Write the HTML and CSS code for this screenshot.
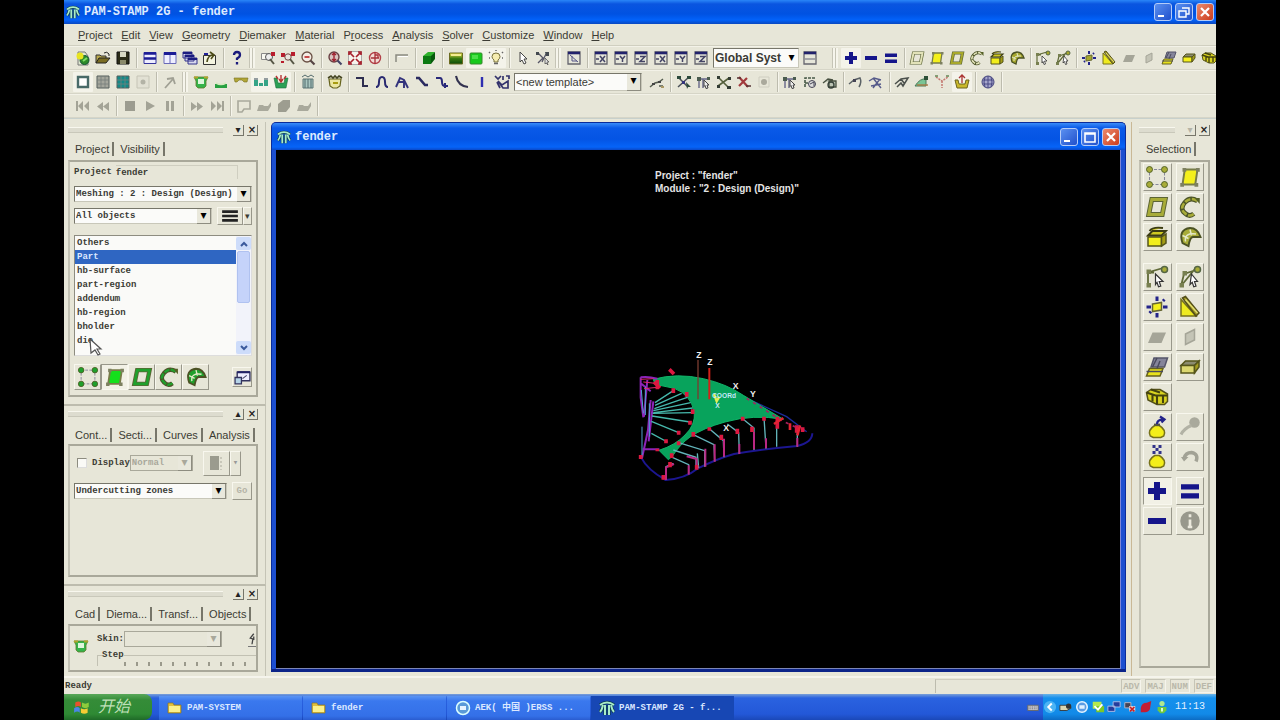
FILE: index.html
```html
<!DOCTYPE html>
<html lang="en">
<head>
<meta charset="utf-8">
<title>PAM-STAMP 2G - fender</title>
<link rel="stylesheet" href="styles.css">
</head>
<body>
<svg class="defs" aria-hidden="true">
  <defs>
    <linearGradient id="gGreen" x1="0" y1="0" x2="0" y2="1"><stop offset="0" stop-color="#f2e24a"/><stop offset=".5" stop-color="#3a7a10"/><stop offset="1" stop-color="#0a4a08"/></linearGradient>
  </defs>
  <symbol id="logo" viewBox="0 0 16 16"><path d="M1 5q7-5 14 0M4 5q-1 5-3 7M6 5v10M10 5v10M12 5q1 5 3 7" fill="none" stroke="#0c3a50" stroke-width="3.400"/><path d="M1 5q7-5 14 0M4 5q-1 5-3 7M6 5v10M10 5v10M12 5q1 5 3 7" fill="none" stroke="#a8ecc8" stroke-width="2"/></symbol>
  <symbol id="new" viewBox="0 0 16 16"><path d="M3 2h7l3 4v9H3z" fill="#dfe8d0" stroke="#777"/><circle cx="9.500" cy="10" r="4.500" fill="#2d8a2a" stroke="#153"/><circle cx="5" cy="6" r="3.500" fill="#e8e420"/><path d="M8 11l4-3" stroke="#7dde66" stroke-width="2"/></symbol>
  <symbol id="open" viewBox="0 0 16 16"><path d="M1 13V5h4l1 1h5v2" fill="#b9a84c" stroke="#333"/><path d="M1 13l3-5h11l-4 5z" fill="#7a6c22" stroke="#222"/><path d="M9 3q3-2 5 1v2" fill="none" stroke="#222"/></symbol>
  <symbol id="save" viewBox="0 0 16 16"><path d="M2 2h12v12H2z" fill="#2c2c18" stroke="#111"/><path d="M5 2h6v5H5z" fill="#d8d8c4"/><path d="M5 10h6v4H5z" fill="#89896a"/></symbol>
  <symbol id="hs" viewBox="0 0 16 16"><path d="M2 2.500h12v11H2z" fill="#eef" stroke="#33339c"/><path d="M2 3.500h12M2 8.500h12" stroke="#1c1c96" stroke-width="2.500"/></symbol>
  <symbol id="vs" viewBox="0 0 16 16"><path d="M2 2.500h12v11H2zM8 3v10" fill="#eef" stroke="#6a6ab8"/><path d="M2 3.500h12" stroke="#1c1c96" stroke-width="3"/></symbol>
  <symbol id="casc" viewBox="0 0 16 16"><path d="M1 2h9v6H1zM3 5h9v6H3zM6 8h9v6H6z" fill="#d8d8ee" stroke="#33338a"/><path d="M1 3h9M3 6h9M6 9h9" stroke="#1c1c80" stroke-width="2"/></symbol>
  <symbol id="neww" viewBox="0 0 16 16"><path d="M1.500 5.500h12v9h-12z" fill="#f4f4e0" stroke="#333"/><path d="M5 12q1-7 6-7M8 2l4 3-3 4" fill="none" stroke="#4b4a18" stroke-width="1.600"/><path d="M2 4h4" stroke="#229" stroke-width="2"/></symbol>
  <symbol id="help" viewBox="0 0 16 16"><path d="M5 5q0-3 3-3t3 3q0 2-3 3.500V10M8 12v2.500" fill="none" stroke="#1a1a7c" stroke-width="2.300"/></symbol>
  <symbol id="zsel" viewBox="0 0 16 16"><path d="M1.500 3.500h7v6h-7z" fill="#f8f8f0" stroke="#888"/><circle cx="9" cy="7" r="3.500" fill="#eee" stroke="#555"/><path d="M10 9l4 5" stroke="#554" stroke-width="2"/><path d="M11 2h4v4h-4z" fill="#b81c2c"/></symbol>
  <symbol id="zarea" viewBox="0 0 16 16"><path d="M1 3h4v4H1zM11 2h4v4h-4zM1 11h3v2H1z" fill="#b81c2c"/><circle cx="8" cy="7" r="3.200" fill="#e8e4dc" stroke="#744"/><path d="M10 9l4 5" stroke="#554" stroke-width="2"/></symbol>
  <symbol id="zout" viewBox="0 0 16 16"><circle cx="7" cy="7" r="5" fill="#f4ece4" stroke="#6a5044" stroke-width="1.300"/><path d="M4.500 7h5" stroke="#b22" stroke-width="1.600"/><path d="M10.500 10.500l4 4" stroke="#544" stroke-width="2.200"/></symbol>
  <symbol id="zdyn" viewBox="0 0 16 16"><circle cx="7" cy="7" r="5" fill="#d8c4c0" stroke="#6a4044" stroke-width="1.400"/><path d="M7 3v8M5 5l2-2 2 2M5 9l2 2 2-2" fill="none" stroke="#a02230" stroke-width="1.400"/><path d="M10.500 10.500l4 4" stroke="#446" stroke-width="2.200"/></symbol>
  <symbol id="fit" viewBox="0 0 16 16"><path d="M1.500 1.500h13v13h-13z" fill="#f6f2ec" stroke="#aaa"/><path d="M3 3l4 4M13 3L9 7M3 13l4-4M13 13L9 9M2 5V2h3M11 2h3v3M2 11v3h3M11 14h3v-3" fill="none" stroke="#a8202c" stroke-width="1.700"/></symbol>
  <symbol id="ctr" viewBox="0 0 16 16"><circle cx="8" cy="8" r="5.500" fill="#f2dcd6" stroke="#b34048" stroke-width="1.400"/><path d="M8 2v12M4 8h8M8 5h3v3" fill="none" stroke="#a83038" stroke-width="1.300"/></symbol>
  <symbol id="rule" viewBox="0 0 16 16"><path d="M2 12V5h12" fill="none" stroke="#8a8a80" stroke-width="1.500"/><path d="M4 6.500h10" stroke="#fff"/></symbol>
  <symbol id="gbox" viewBox="0 0 16 16"><path d="M2 6l5-4h7l-3 4z" fill="#2fb32c"/><path d="M2 6h8v8H2z" fill="#0c7a12"/><path d="M10 6l4-4v7l-4 5z" fill="#075a0c"/></symbol>
  <symbol id="grad" viewBox="0 0 16 16"><path d="M1.500 3h13v11h-13z" fill="url(#gGreen)" stroke="#6a6a20"/><path d="M3 5h10" stroke="#f4ec90" stroke-width="2"/></symbol>
  <symbol id="gsq" viewBox="0 0 16 16"><rect x="2" y="3" width="12" height="11" rx="1" fill="#17c91c" stroke="#36882c"/><path d="M4 5h6v4H4z" fill="#4ae048"/></symbol>
  <symbol id="bulb" viewBox="0 0 16 16"><path d="M8 3q4 0 4 3.500 0 2-2 3.500v2H6v-2Q4 8.500 4 6.500 4 3 8 3z" fill="#f5ecb0" stroke="#77703a"/><path d="M6 13.500h4M8 1V0M2 3L1 2M14 3l1-1M1 8h1M14 8h1" stroke="#666" stroke-width="1.500"/></symbol>
  <symbol id="cur" viewBox="0 0 16 16"><path d="M5 2l7 7H9l2 4-2 1-2-4-2 2z" fill="#fff" stroke="#444"/></symbol>
  <symbol id="curp" viewBox="0 0 16 16"><path d="M3 3l5 5-5 5M7 12l4-8" fill="none" stroke="#556" stroke-width="1.300"/><path d="M10 2h4v4h-3zM1 2h3v3H1z" fill="#444a50"/><path d="M10 8l4 4h-2l1 3-2-2-1 1z" fill="#ddd" stroke="#555" stroke-width=".8"/></symbol>
  <symbol id="w" viewBox="0 0 16 16"><path d="M2 2h12v12H2z" fill="#e6e6da" stroke="#65656e" stroke-width="1.300"/><path d="M2 3h12" stroke="#22226c" stroke-width="2.600"/></symbol>
  <symbol id="wl" viewBox="0 0 16 16"><use href="#w"/><path d="M6 6v5h5M4 5l8 7" fill="none" stroke="#558"/></symbol>
  <symbol id="wx" viewBox="0 0 16 16"><use href="#w"/><path d="M7 6l5 6M12 6l-5 6M3 9h3" stroke="#446" stroke-width="1.500"/></symbol>
  <symbol id="wy" viewBox="0 0 16 16"><use href="#w"/><path d="M7 6l2.500 3L12 6M9.500 9v3M3 9h3" fill="none" stroke="#446" stroke-width="1.500"/></symbol>
  <symbol id="wz" viewBox="0 0 16 16"><use href="#w"/><path d="M7 6.500h5l-5 5h5M3 9h3" fill="none" stroke="#446" stroke-width="1.500"/></symbol>
  <symbol id="wb" viewBox="0 0 16 16"><use href="#w"/><path d="M3 9h10" stroke="#778" stroke-width="1.200"/></symbol>
  <symbol id="plus" viewBox="0 0 16 16"><path d="M6 2h4v4h4v4h-4v4H6v-4H2V6h4z" fill="#15158a"/></symbol>
  <symbol id="minus" viewBox="0 0 16 16"><path d="M2 6h12v4H2z" fill="#15158a"/></symbol>
  <symbol id="equals" viewBox="0 0 16 16"><path d="M2 3.500h12V7H2zM2 9.500h12V13H2z" fill="#15158a"/></symbol>
  <symbol id="pts" viewBox="0 0 16 16"><path d="M3 3h10v10H3z" fill="none" stroke="#889" stroke-width=".7" stroke-dasharray="2 1"/><g fill="currentColor" stroke="#4a5a20" stroke-width=".6"><circle cx="3" cy="3" r="2"/><circle cx="13" cy="3" r="2"/><circle cx="3" cy="13" r="2"/><circle cx="13" cy="13" r="2"/></g></symbol>
  <symbol id="quadf" viewBox="0 0 16 16"><path d="M4.500 3h8.500l-1.500 10H3z" fill="currentColor" stroke="#777c48" stroke-width="1.300"/><path d="M3 2h2.500v2.500H3zM12 2h2.500v2.500H12zM1.500 12H4v2.500H1.500zM11 12h2.500v2.500H11z" fill="#7d8060"/></symbol>
  <symbol id="quad" viewBox="0 0 16 16"><path d="M4.500 3h9l-2 10h-9z" fill="none" stroke="#5c6434" stroke-width="3.200"/><path d="M4.500 3h9l-2 10h-9z" fill="none" stroke="currentColor" stroke-width="1.900"/></symbol>
  <symbol id="arc" viewBox="0 0 16 16"><path d="M13 4Q8 1 4.500 5t0 7q3 3 6 .5" fill="none" stroke="#4c5428" stroke-width="3.200"/><path d="M13 4Q8 1 4.500 5t0 7q3 3 6 .5" fill="none" stroke="currentColor" stroke-width="1.700" stroke-dasharray="4 1"/><path d="M11 2h3.500v4z" fill="#556026"/></symbol>
  <symbol id="chest" viewBox="0 0 16 16"><path d="M2 8h9v6H2z" fill="#f2ee1c" stroke="#55551a"/><path d="M11 8l3-2v6l-3 2z" fill="#a49c14" stroke="#55551a"/><path d="M2 7l3-3h9l-3 3zM3 4q2-3 9-2" fill="#cfc922" stroke="#3c3c14" stroke-width="1.200"/></symbol>
  <symbol id="fan" viewBox="0 0 16 16"><path d="M3 12Q0 3 8 2q5 0 7 6l-5 0q-2 0-3 6z" fill="currentColor" stroke="#4b5224" stroke-width="1.300"/><path d="M5 11q-1-6 7-5M3 7l4 2M8 3l1 4" fill="none" stroke="#e4e9c8" stroke-width="1"/></symbol>
  <symbol id="path1" viewBox="0 0 16 16"><path d="M2 14V5l10-3M2 5h4" fill="none" stroke="#606a38" stroke-width="1.200"/><circle cx="13" cy="3" r="2" fill="currentColor" stroke="#564"/><path d="M1 3h3v3H1zM1 12h3v3H1z" fill="#788050"/><path d="M7 6l5 5H9.500l1 3-1.500.5-1-3L7 13z" fill="#fff" stroke="#333" stroke-width=".8"/></symbol>
  <symbol id="path2" viewBox="0 0 16 16"><path d="M2 14l2-8 9-3M2 14l9-11" fill="none" stroke="#606a38" stroke-width="1.200"/><circle cx="13" cy="3" r="2" fill="currentColor" stroke="#564"/><path d="M3 4h3v3H3zM1 12h3v3H1z" fill="#788050"/><path d="M9 6l4 5h-2l1 3-1.500.5-1-3L8 13z" fill="#fff" stroke="#333" stroke-width=".8"/></symbol>
  <symbol id="star" viewBox="0 0 16 16"><path d="M5 6l6-1v5l-6 1z" fill="currentColor" stroke="#663"/><path d="M8 1v3M8 12v3M1 8h3M12 8h3M3 12l1-1M12 4l1-1" stroke="#23238a" stroke-width="2"/></symbol>
  <symbol id="setsq" viewBox="0 0 16 16"><path d="M2 3v11h10z" fill="#eeea20" stroke="#77721c"/><path d="M3 2l2-1 9 11-2 2z" fill="#a39b26" stroke="#55511a"/><path d="M5 3l8 9" stroke="#e4df70"/></symbol>
  <symbol id="para" viewBox="0 0 16 16"><path d="M5 5h9l-3 7H2z" fill="#a5a598"/></symbol>
  <symbol id="para2" viewBox="0 0 16 16"><path d="M5 6l6-3v7l-6 3z" fill="#c4c4b6" stroke="#a5a598"/></symbol>
  <symbol id="layers" viewBox="0 0 16 16"><path d="M6 2h9l-2 6H4z" fill="#85859a" stroke="#55556a"/><path d="M3 9h9l-2 5H1z" fill="#e8e21c" stroke="#66621c"/><path d="M5 8l3-6M8 9l2-5M1 11h11" stroke="#4a4a5e"/></symbol>
  <symbol id="cube" viewBox="0 0 16 16"><path d="M2 7l3-3h9l-3 3z" fill="#8c8c70" stroke="#55551a"/><path d="M2 7h9v5H2z" fill="currentColor" stroke="#55551a"/><path d="M11 7l3-3v4l-3 4z" fill="#a49c20" stroke="#55551a"/></symbol>
  <symbol id="cubes" viewBox="0 0 16 16"><path d="M1 5l3-2h6l5 3v5l-2 2H8l-6-3z" fill="#d8d220" stroke="#55521a" stroke-width="1"/><path d="M1 5l6 2h8M4 3l6 2M5 6v5M8 7v6M12 7v5" fill="none" stroke="#44420e" stroke-width="1.400"/></symbol>
  <symbol id="bag1" viewBox="0 0 16 16"><path d="M6.500 7h3q5 3 3 7l-2 1h-5l-2-1q-2-4 3-7z" fill="#f4ee1a" stroke="#77711a"/><path d="M6 6.500h4" stroke="#554" stroke-width="1.500"/><path d="M8 6q0-3 4-3M10 1l3 2-2 2" stroke="#23238a" stroke-width="1.500" fill="none"/></symbol>
  <symbol id="bag2" viewBox="0 0 16 16"><path d="M6.500 7h3q5 3 3 7l-2 1h-5l-2-1q-2-4 3-7z" fill="#f4ee1a" stroke="#77711a"/><path d="M5 0h2v2H5zM9 0h2v2H9zM7 2h2v2H7zM5 4h2v2H5zM9 4h2v2H9z" fill="#33338a"/></symbol>
  <symbol id="wand" viewBox="0 0 16 16"><circle cx="11" cy="5" r="3.500" fill="#a9a99c"/><path d="M2 13q2-4 7-6" stroke="#b2b2a5" stroke-width="2" fill="none"/></symbol>
  <symbol id="undo" viewBox="0 0 16 16"><path d="M4 9q1-4 5-4 5 1 3 6" fill="none" stroke="#a2a295" stroke-width="2.300"/><path d="M2 8h5l-3 3z" fill="#a2a295"/></symbol>
  <symbol id="info" viewBox="0 0 16 16"><circle cx="8" cy="8" r="6.500" fill="#98988c"/><path d="M8 3.500v2M8 7v5.500M6.500 12h3" stroke="#eceade" stroke-width="1.800"/></symbol>
  <symbol id="frame" viewBox="0 0 16 16"><path d="M3 3h10v10H3z" fill="#fff" stroke="#486a68" stroke-width="2.400"/></symbol>
  <symbol id="grid" viewBox="0 0 16 16"><path d="M2 2h12v12H2z" fill="currentColor" stroke="#555e5c"/><path d="M2 6h12M2 10h12M6 2v12M10 2v12" stroke="#777f7c" stroke-width=".8"/></symbol>
  <symbol id="dim" viewBox="0 0 16 16"><path d="M2 2h12v12H2z" fill="#e2e1d4" stroke="#c5c4b6"/><circle cx="8" cy="8" r="2.500" fill="#b3b3a6"/></symbol>
  <symbol id="arr" viewBox="0 0 16 16"><path d="M3 14l8-9M5 5l6-1 2 6" fill="none" stroke="#a0a094" stroke-width="1.800"/></symbol>
  <symbol id="cup" viewBox="0 0 16 16"><path d="M1 3h14l-2 4v5l-2 2H5l-2-2V7z" fill="#35b34a" stroke="#5f7a2c" stroke-width=".8"/><path d="M5 5h6v5H5z" fill="#dff6dc"/><path d="M1 3.500h4M11 3.500h4" stroke="#b0a42c" stroke-width="2.200"/></symbol>
  <symbol id="gflat" viewBox="0 0 16 16"><path d="M2 10h12v4H2z" fill="#27a040"/><path d="M3 9q5 3 10 0" fill="none" stroke="#d6e8c0" stroke-width="1.500"/></symbol>
  <symbol id="yflat" viewBox="0 0 16 16"><path d="M1 4h14l-1 4h-3L9 6H6L4 8H2z" fill="#b1a637" stroke="#77701e" stroke-width=".6"/></symbol>
  <symbol id="teal" viewBox="0 0 16 16"><path d="M1 6h4v6H1zM11 6h4v6h-4zM6 9h4v3H6z" fill="#35a487"/><path d="M1 5h4M11 5h4" stroke="#345" stroke-width="1"/></symbol>
  <symbol id="cupr" viewBox="0 0 16 16"><path d="M1 4h3l1 5h6l1-5h3l-2 10H3z" fill="#2ba055" stroke="#1f7040" stroke-width=".6"/><path d="M8 1v6M6 5l2 3 2-3M3 2l2 3M13 2l-2 3" stroke="#b63434" stroke-width="1.400" fill="none"/></symbol>
  <symbol id="hatch" viewBox="0 0 16 16"><path d="M3 5h10v9H3z" fill="#a9c6c0" stroke="#5d7474"/><path d="M5 5v9M8 5v9M11 5v9M2 3l3-2 3 2 3-2 3 2" stroke="#536a6c" fill="none"/></symbol>
  <symbol id="cupy" viewBox="0 0 16 16"><path d="M2 5h12l-1 7-3 2H6l-3-2z" fill="#ece6a0" stroke="#66631e" stroke-width="1.200"/><path d="M1 4l3-2 2 2 2-2 2 2 2-2 3 2" fill="none" stroke="#444420" stroke-width="1.600"/><path d="M6 9h5" stroke="#a89c10" stroke-width="2"/></symbol>
  <symbol id="c1" viewBox="0 0 16 16"><path d="M2 4h7v8h5" fill="none" stroke="#2e2e50" stroke-width="2"/></symbol>
  <symbol id="c2" viewBox="0 0 16 16"><path d="M2 13q3 0 3-5t3-5q3 0 3 5t3 5" fill="none" stroke="#282870" stroke-width="2"/></symbol>
  <symbol id="c3" viewBox="0 0 16 16"><path d="M2 13L6 4l4 2 4 8M4 8h6M10 6v8" fill="none" stroke="#33337c" stroke-width="1.900"/></symbol>
  <symbol id="c4" viewBox="0 0 16 16"><path d="M2 4h3l6 7h3" fill="none" stroke="#2a2a60" stroke-width="2.600"/></symbol>
  <symbol id="c5" viewBox="0 0 16 16"><path d="M2 4h4q2 0 2 4t3 4h3M11 9v5" fill="none" stroke="#29297a" stroke-width="2"/></symbol>
  <symbol id="c6" viewBox="0 0 16 16"><path d="M2 2q2 10 12 11" fill="none" stroke="#333350" stroke-width="2.100"/></symbol>
  <symbol id="c7" viewBox="0 0 16 16"><path d="M8 3v10" stroke="#2e2eb0" stroke-width="2.400"/></symbol>
  <symbol id="c8" viewBox="0 0 16 16"><path d="M1 2l3 3 3-3M9 2v4M12 2h3v3M4 7l4 4 6-4v7H9zM3 8l3 6" fill="none" stroke="#33336c" stroke-width="1.700"/></symbol>
  <symbol id="e1" viewBox="0 0 16 16"><path d="M1 13l5-4 4-1 4-3M10 12h4" fill="none" stroke="#555e50" stroke-width="1.500"/><path d="M9 7h3v2H9zM3 9h3v2H3z" fill="#444"/><path d="M12 12h3v2h-3z" fill="#a96"/></symbol>
  <symbol id="e2" viewBox="0 0 16 16"><path d="M2 13L13 3M3 4l9 9" stroke="#4a5058" stroke-width="1.500"/><path d="M1 2h4v3H1zM11 2h4v3h-4zM10 8l5 5h-3l-1 2z" fill="#2d4a3c"/><path d="M6 7h3v3H6z" fill="#33337c"/></symbol>
  <symbol id="e3" viewBox="0 0 16 16"><path d="M3 14V5h10M7 5v9" fill="none" stroke="#668" stroke-width="1.400"/><path d="M1 3h4v4H1zM11 3h3v3h-3z" fill="#4b5c50"/><path d="M8 6l5 5h-2l1 3-2 .5-1-3-1 1z" fill="#eee" stroke="#444"/></symbol>
  <symbol id="e4" viewBox="0 0 16 16"><path d="M2 3l11 11M2 12L13 4" stroke="#55603c" stroke-width="1.600"/><path d="M1 2h3v3H1zM12 3h3v3h-3zM1 11h3v3H1zM11 12h4v3h-4z" fill="#333c34"/></symbol>
  <symbol id="e5" viewBox="0 0 16 16"><path d="M3 3l9 10M3 12l8-8" stroke="#a33a3c" stroke-width="2.200"/><path d="M1 4h4M10 12h5" stroke="#533" stroke-width="1.600"/></symbol>
  <symbol id="e6" viewBox="0 0 16 16"><circle cx="8" cy="8" r="3" fill="#aaa99c"/><path d="M3 3h10v10H3z" fill="none" stroke="#cfcec1"/></symbol>
  <symbol id="e7" viewBox="0 0 16 16"><path d="M3 13V4h11M3 9h5" fill="none" stroke="#485a48" stroke-width="1.600" stroke-dasharray="3 1"/><circle cx="10" cy="10" r="3.500" fill="#ddd" stroke="#445"/><path d="M8 10l4-2v4" stroke="#445" fill="none"/></symbol>
  <symbol id="e8" viewBox="0 0 16 16"><path d="M1 9l5-4 5 1M7 7h7v6H7z" fill="#bcc4b4" stroke="#485040" stroke-width="1.300"/><circle cx="9" cy="11" r="3" fill="none" stroke="#354038" stroke-width="1.300"/></symbol>
  <symbol id="e9" viewBox="0 0 16 16"><path d="M1 10l5-4 6-2q2 4-1 9" fill="none" stroke="#5b6266" stroke-width="1.500"/><path d="M5 5h3v3H5z" fill="#445"/></symbol>
  <symbol id="e10" viewBox="0 0 16 16"><path d="M1 7l5-3 7 2M3 12l10-2M5 4l8 10M12 5L5 14" fill="none" stroke="#555a8a" stroke-width="1.400"/></symbol>
  <symbol id="e11" viewBox="0 0 16 16"><path d="M1 10l6-5 7-1-5 8-2-3-4 4M7 5l3 4" fill="none" stroke="#4b504c" stroke-width="1.500"/></symbol>
  <symbol id="e12" viewBox="0 0 16 16"><path d="M1 12q5-8 11-7v7z" fill="#79c494" stroke="#4b7a58"/><path d="M10 2h4v4h-4z" fill="#2e5038"/><path d="M3 11h11" stroke="#a74" stroke-width="1.400"/></symbol>
  <symbol id="e13" viewBox="0 0 16 16"><path d="M2 3l6 4 6-4M8 7v7" fill="none" stroke="#c47870" stroke-width="1.500" stroke-dasharray="2 1"/><path d="M1 2h3M12 2h3" stroke="#685" stroke-width="1.500"/></symbol>
  <symbol id="e14" viewBox="0 0 16 16"><path d="M1 6h3l1 4h6l1-4h3l-2 8H3z" fill="#c9b82c" stroke="#6d641c"/><path d="M8 1v8M5 4l3-3 3 3" stroke="#a33" fill="none" stroke-width="1.300"/></symbol>
  <symbol id="e15" viewBox="0 0 16 16"><circle cx="8" cy="8" r="6" fill="#a7a7cc" stroke="#44447c"/><path d="M3 6h10M3 10h10M8 2v12M5 3q-2 5 0 10M11 3q2 5 0 10" stroke="#4a4a84" fill="none"/></symbol>
  <symbol id="m1" viewBox="0 0 16 16"><path d="M1 3h2v10H1zM8 3v10L3 8zM14 3v10L9 8z" fill="#a3a396"/></symbol>
  <symbol id="m2" viewBox="0 0 16 16"><path d="M8 4v9L2 8.500zM14 4v9L8 8.500z" fill="#a3a396"/></symbol>
  <symbol id="m3" viewBox="0 0 16 16"><path d="M3 3h10v10H3z" fill="#9c9c90"/></symbol>
  <symbol id="m4" viewBox="0 0 16 16"><path d="M4 3l9 5-9 5z" fill="#a3a396"/></symbol>
  <symbol id="m5" viewBox="0 0 16 16"><path d="M4 3h3v10H4zM9 3h3v10H9z" fill="#a3a396"/></symbol>
  <symbol id="m6" viewBox="0 0 16 16"><path d="M2 4l6 4.500L2 13zM8 4l6 4.500L8 13z" fill="#a3a396"/></symbol>
  <symbol id="m7" viewBox="0 0 16 16"><path d="M2 3l5 5-5 5zM8 3l5 5-5 5zM13 3h2v10h-2z" fill="#a3a396"/></symbol>
  <symbol id="m8" viewBox="0 0 16 16"><path d="M2 3h12v8H8l-2 3H2z" fill="none" stroke="#a9a99c" stroke-width="1.600"/></symbol>
  <symbol id="m9" viewBox="0 0 16 16"><path d="M1 13l2-6h4l1 1h4l3-4v4l-3 5z" fill="#a9a99c"/></symbol>
  <symbol id="m10" viewBox="0 0 16 16"><path d="M2 6l5-4h7v7l-4 5H2z" fill="#9d9d90"/></symbol>
  <symbol id="folder" viewBox="0 0 16 16"><path d="M1 3h5l1 2h7v8H1z" fill="#e0bf3c" stroke="#8a7424" stroke-width=".7"/><path d="M2 6h11v6H2z" fill="#fbf08c"/></symbol>
  <symbol id="clone" viewBox="0 0 16 16"><path d="M3 3h12v8H3z" fill="#eef" stroke="#33335e" stroke-width="1.300"/><path d="M1 8h6v6H1z" fill="#b6d4e8" stroke="#33335e" stroke-width="1.200"/><path d="M3 3h12" stroke="#222266" stroke-width="2"/><path d="M8 9l4-3" stroke="#446"/></symbol>
</svg>

<div class="app">
  <header class="titlebar">
    <svg class="i14"><use href="#logo"/></svg>
    <h1>PAM-STAMP 2G - fender</h1>
    <div class="winbtns">
      <button class="wb" aria-label="Minimize"><svg viewBox="0 0 16 16"><path d="M3 11h6v2H3z" fill="#fff"/></svg></button>
      <button class="wb" aria-label="Restore"><svg viewBox="0 0 16 16"><path d="M6 4h7v6h-3M3 7h7v6H3z" fill="none" stroke="#fff" stroke-width="1.400"/></svg></button>
      <button class="wb close" aria-label="Close"><svg viewBox="0 0 16 16"><path d="M4 4l8 8M12 4l-8 8" stroke="#fff" stroke-width="2.200"/></svg></button>
    </div>
  </header>

  <nav class="menubar">
    <button><u>P</u>roject</button><button><u>E</u>dit</button><button><u>V</u>iew</button><button><u>G</u>eometry</button><button><u>D</u>iemaker</button><button><u>M</u>aterial</button><button>P<u>r</u>ocess</button><button><u>A</u>nalysis</button><button><u>S</u>olver</button><button><u>C</u>ustomize</button><button><u>W</u>indow</button><button><u>H</u>elp</button>
  </nav>

  <div class="toolbar">
    <button class="tb" aria-label="New"><svg><use href="#new"/></svg></button>
    <button class="tb" aria-label="Open"><svg><use href="#open"/></svg></button>
    <button class="tb" aria-label="Save"><svg><use href="#save"/></svg></button>
    <i class="sep"></i>
    <button class="tb" aria-label="Tile horizontally"><svg><use href="#hs"/></svg></button>
    <button class="tb" aria-label="Tile vertically"><svg><use href="#vs"/></svg></button>
    <button class="tb" aria-label="Cascade"><svg><use href="#casc"/></svg></button>
    <button class="tb" aria-label="New window"><svg><use href="#neww"/></svg></button>
    <i class="sep"></i>
    <button class="tb" aria-label="Help"><svg><use href="#help"/></svg></button>
    <i class="grip"></i>
    <button class="tb" aria-label="Zoom selection"><svg><use href="#zsel"/></svg></button>
    <button class="tb" aria-label="Zoom area"><svg><use href="#zarea"/></svg></button>
    <button class="tb" aria-label="Zoom out"><svg><use href="#zout"/></svg></button>
    <i class="sep"></i>
    <button class="tb" aria-label="Dynamic zoom"><svg><use href="#zdyn"/></svg></button>
    <button class="tb" aria-label="Fit"><svg><use href="#fit"/></svg></button>
    <button class="tb" aria-label="Center"><svg><use href="#ctr"/></svg></button>
    <i class="sep"></i>
    <button class="tb" aria-label="Ruler"><svg><use href="#rule"/></svg></button>
    <i class="sep"></i>
    <button class="tb" aria-label="Solid"><svg><use href="#gbox"/></svg></button>
    <i class="sep"></i>
    <button class="tb" aria-label="Shaded"><svg><use href="#grad"/></svg></button>
    <button class="tb on" aria-label="Flat"><svg><use href="#gsq"/></svg></button>
    <button class="tb on" aria-label="Light"><svg><use href="#bulb"/></svg></button>
    <i class="sep"></i>
    <button class="tb" aria-label="Pointer"><svg><use href="#cur"/></svg></button>
    <button class="tb" aria-label="Pick points"><svg><use href="#curp"/></svg></button>
    <i class="grip"></i>
    <button class="tb" aria-label="Isometric view"><svg><use href="#wl"/></svg></button>
    <i class="sep"></i>
    <button class="tb" aria-label="View X"><svg><use href="#wx"/></svg></button>
    <button class="tb" aria-label="View Y"><svg><use href="#wy"/></svg></button>
    <button class="tb" aria-label="View Z"><svg><use href="#wz"/></svg></button>
    <button class="tb" aria-label="View minus X"><svg><use href="#wx"/></svg></button>
    <button class="tb" aria-label="View minus Y"><svg><use href="#wy"/></svg></button>
    <button class="tb" aria-label="View minus Z"><svg><use href="#wz"/></svg></button>
    <span class="combo system"><select aria-label="Coordinate system"><option>Global Syst</option></select></span>
    <button class="tb" aria-label="Edit system"><svg><use href="#wb"/></svg></button>
    <i class="grip wide"></i>
    <button class="tb on" aria-label="Add"><svg><use href="#plus"/></svg></button>
    <button class="tb" aria-label="Remove"><svg><use href="#minus"/></svg></button>
    <button class="tb" aria-label="Replace"><svg><use href="#equals"/></svg></button>
    <i class="sep thin"></i>
    <button class="tb pale" aria-label="Points"><svg><use href="#quad"/></svg></button>
    <button class="tb yel" aria-label="Faces"><svg><use href="#quadf"/></svg></button>
    <button class="tb olive" aria-label="Contours"><svg><use href="#quad"/></svg></button>
    <button class="tb pale" aria-label="Curves"><svg><use href="#arc"/></svg></button>
    <button class="tb" aria-label="Objects"><svg><use href="#chest"/></svg></button>
    <button class="tb olive" aria-label="Surfaces"><svg><use href="#fan"/></svg></button>
    <i class="sep thin"></i>
    <button class="tb olive" aria-label="Path"><svg><use href="#path1"/></svg></button>
    <button class="tb olive" aria-label="Free path"><svg><use href="#path2"/></svg></button>
    <i class="sep thin"></i>
    <button class="tb olive" aria-label="Expand"><svg><use href="#star"/></svg></button>
    <button class="tb" aria-label="Angle"><svg><use href="#setsq"/></svg></button>
    <button class="tb" aria-label="Plane"><svg><use href="#para"/></svg></button>
    <button class="tb" aria-label="Side"><svg><use href="#para2"/></svg></button>
    <button class="tb" aria-label="Layers"><svg><use href="#layers"/></svg></button>
    <button class="tb yel" aria-label="Box"><svg><use href="#cube"/></svg></button>
    <button class="tb" aria-label="Boxes"><svg><use href="#cubes"/></svg></button>
  </div>

  <div class="toolbar">
    <button class="tb on" aria-label="Frame"><svg><use href="#frame"/></svg></button>
    <button class="tb gray" aria-label="Mesh"><svg><use href="#grid"/></svg></button>
    <button class="tb tealc" aria-label="Filled mesh"><svg><use href="#grid"/></svg></button>
    <button class="tb" aria-label="Point"><svg><use href="#dim"/></svg></button>
    <i class="sep"></i>
    <button class="tb" aria-label="Direction"><svg><use href="#arr"/></svg></button>
    <i class="grip"></i>
    <button class="tb" aria-label="Die"><svg><use href="#cup"/></svg></button>
    <button class="tb" aria-label="Punch"><svg><use href="#gflat"/></svg></button>
    <button class="tb" aria-label="Blankholder"><svg><use href="#yflat"/></svg></button>
    <button class="tb on" aria-label="Addendum"><svg><use href="#teal"/></svg></button>
    <button class="tb on" aria-label="Forming"><svg><use href="#cupr"/></svg></button>
    <i class="sep"></i>
    <button class="tb" aria-label="Hatch"><svg><use href="#hatch"/></svg></button>
    <i class="sep"></i>
    <button class="tb" aria-label="Tool set"><svg><use href="#cupy"/></svg></button>
    <i class="sep"></i>
    <button class="tb" aria-label="Profile 1"><svg><use href="#c1"/></svg></button>
    <button class="tb" aria-label="Profile 2"><svg><use href="#c2"/></svg></button>
    <button class="tb" aria-label="Profile 3"><svg><use href="#c3"/></svg></button>
    <button class="tb" aria-label="Profile 4"><svg><use href="#c4"/></svg></button>
    <button class="tb" aria-label="Profile 5"><svg><use href="#c5"/></svg></button>
    <button class="tb" aria-label="Profile 6"><svg><use href="#c6"/></svg></button>
    <button class="tb" aria-label="Profile 7"><svg><use href="#c7"/></svg></button>
    <button class="tb" aria-label="Profile 8"><svg><use href="#c8"/></svg></button>
    <span class="combo template"><select aria-label="Template"><option>&lt;new template&gt;</option></select></span>
    <button class="tb" aria-label="Edit profile"><svg><use href="#e1"/></svg></button>
    <i class="sep"></i>
    <button class="tb" aria-label="Split"><svg><use href="#e2"/></svg></button>
    <button class="tb" aria-label="Move point"><svg><use href="#e3"/></svg></button>
    <button class="tb" aria-label="Join"><svg><use href="#e4"/></svg></button>
    <button class="tb" aria-label="Delete"><svg><use href="#e5"/></svg></button>
    <button class="tb" aria-label="Clear"><svg><use href="#e6"/></svg></button>
    <i class="sep thin"></i>
    <button class="tb" aria-label="Edge"><svg><use href="#e3"/></svg></button>
    <button class="tb" aria-label="Edge loop"><svg><use href="#e7"/></svg></button>
    <button class="tb" aria-label="Surface loop"><svg><use href="#e8"/></svg></button>
    <i class="sep thin"></i>
    <button class="tb" aria-label="Bend"><svg><use href="#e9"/></svg></button>
    <button class="tb" aria-label="Cross"><svg><use href="#e10"/></svg></button>
    <i class="sep thin"></i>
    <button class="tb" aria-label="Sweep"><svg><use href="#e11"/></svg></button>
    <button class="tb" aria-label="Fill"><svg><use href="#e12"/></svg></button>
    <button class="tb" aria-label="Trim"><svg><use href="#e13"/></svg></button>
    <button class="tb on" aria-label="Draw"><svg><use href="#e14"/></svg></button>
    <i class="sep thin"></i>
    <button class="tb" aria-label="Mesh sphere"><svg><use href="#e15"/></svg></button>
    <i class="sep"></i>
  </div>

  <div class="toolbar">
    <button class="tb" aria-label="First"><svg><use href="#m1"/></svg></button>
    <button class="tb" aria-label="Rewind"><svg><use href="#m2"/></svg></button>
    <i class="sep"></i>
    <button class="tb" aria-label="Stop"><svg><use href="#m3"/></svg></button>
    <button class="tb" aria-label="Play"><svg><use href="#m4"/></svg></button>
    <button class="tb" aria-label="Pause"><svg><use href="#m5"/></svg></button>
    <i class="sep"></i>
    <button class="tb" aria-label="Forward"><svg><use href="#m6"/></svg></button>
    <button class="tb" aria-label="Last"><svg><use href="#m7"/></svg></button>
    <i class="sep"></i>
    <button class="tb" aria-label="Loop"><svg><use href="#m8"/></svg></button>
    <button class="tb" aria-label="Open animation"><svg><use href="#m9"/></svg></button>
    <button class="tb" aria-label="Record"><svg><use href="#m10"/></svg></button>
    <button class="tb" aria-label="Export animation"><svg><use href="#m9"/></svg></button>
    <i class="sep"></i>
  </div>

  <main class="main">
    <aside class="left">
      <section class="dock tall">
        <div class="dockhead"><span class="rail"></span><button aria-label="Collapse">▾</button><button aria-label="Close">×</button></div>
        <div class="tabs"><button>Project</button><button class="active">Visibility</button></div>
        <div class="page">
          <div class="field"><label for="proj">Project</label><input id="proj" value="fender" readonly></div>
          <span class="combo mono"><select aria-label="Stage"><option>Meshing : 2 : Design (Design)</option></select></span>
          <div class="row objects">
            <span class="combo mono grow"><select aria-label="Objects"><option>All objects</option></select></span>
            <button class="raised lines" aria-label="Display mode"><svg viewBox="0 0 24 16"><path d="M3 3h18M3 8h18M3 13h18" stroke="#222" stroke-width="3"/></svg></button><button class="raised drop" aria-label="More">▾</button>
          </div>
          <div class="listbox">
            <ul role="listbox" aria-label="Object list">
              <li role="option">Others</li><li role="option" class="sel" aria-selected="true">Part</li><li role="option">hb-surface</li><li role="option">part-region</li><li role="option">addendum</li><li role="option">hb-region</li><li role="option">bholder</li><li role="option">die</li>
            </ul>
            <div class="scroll">
              <button aria-label="Up"><svg viewBox="0 0 10 8"><path d="M2 6l3-3 3 3" fill="none" stroke="#3a5a9c" stroke-width="2"/></svg></button>
              <span class="thumb"></span><span class="track"></span>
              <button aria-label="Down"><svg viewBox="0 0 10 8"><path d="M2 2l3 3 3-3" fill="none" stroke="#3a5a9c" stroke-width="2"/></svg></button>
            </div>
            <svg class="pointer" viewBox="0 0 14 18"><path d="M1 1l11 10H8l3 5-2 1-3-5-4 3z" fill="#fff" stroke="#555" stroke-width="1.200"/></svg>
          </div>
          <div class="row shapes">
            <button class="raised sq" aria-label="Points"><svg><use href="#pts"/></svg></button>
            <button class="raised sq down" aria-label="Faces"><svg><use href="#quadf"/></svg></button>
            <button class="raised sq" aria-label="Contours"><svg><use href="#quad"/></svg></button>
            <button class="raised sq" aria-label="Curves"><svg><use href="#arc"/></svg></button>
            <button class="raised sq" aria-label="Surfaces"><svg><use href="#fan"/></svg></button>
            <button class="raised small" aria-label="Clone view"><svg><use href="#clone"/></svg></button>
          </div>
        </div>
      </section>

      <section class="dock mid">
        <div class="dockhead"><span class="rail"></span><button aria-label="Collapse">▴</button><button aria-label="Close">×</button></div>
        <div class="tabs"><button class="active">Cont...</button><button>Secti...</button><button>Curves</button><button>Analysis</button></div>
        <div class="page">
          <div class="row display">
            <input type="checkbox" id="disp"><label for="disp">Display</label>
            <span class="combo mono off"><select aria-label="Display type" disabled><option>Normal</option></select></span>
            <button class="raised chart" aria-label="Scale"><svg viewBox="0 0 20 20"><path d="M3 3h9v14H3z" fill="#9b9b8e"/><path d="M14 4v13" stroke="#aaa99c" stroke-dasharray="2 2"/></svg></button><button class="raised drop2" aria-label="More">▾</button>
          </div>
          <div class="row">
            <span class="combo mono grow"><select aria-label="Contour"><option>Undercutting zones</option></select></span>
            <button class="raised go">Go</button>
          </div>
        </div>
      </section>

      <section class="dock low">
        <div class="dockhead"><span class="rail"></span><button aria-label="Expand">▴</button><button aria-label="Close">×</button></div>
        <div class="tabs"><button>Cad</button><button class="active">Diema...</button><button>Transf...</button><button>Objects</button></div>
        <div class="page diemaker">
          <svg class="i16"><use href="#cup"/></svg>
          <div class="grow">
            <div class="row skin"><label for="skin">Skin:</label><span class="combo mono off"><select id="skin" disabled><option></option></select></span><button class="pick" aria-label="Pick"><svg viewBox="0 0 8 16"><path d="M6 2L2 7l3 1-1 6M6 5v4" fill="none" stroke="#444" stroke-width="1.500"/></svg></button></div>
            <fieldset><legend>Step</legend><div class="ticks"></div></fieldset>
          </div>
        </div>
      </section>
    </aside>

    <section class="doc">
      <header class="doctitle">
        <svg class="i14"><use href="#logo"/></svg>
        <h2>fender</h2>
        <div class="winbtns">
          <button class="wb" aria-label="Minimize"><svg viewBox="0 0 16 16"><path d="M3 11h6v2H3z" fill="#fff"/></svg></button>
          <button class="wb" aria-label="Maximize"><svg viewBox="0 0 16 16"><path d="M3 4h10v9H3zM3 5h10" fill="none" stroke="#fff" stroke-width="1.600"/></svg></button>
          <button class="wb close" aria-label="Close"><svg viewBox="0 0 16 16"><path d="M4 4l8 8M12 4l-8 8" stroke="#fff" stroke-width="2.200"/></svg></button>
        </div>
      </header>
      <svg class="scene" viewBox="0 0 844 518" role="img" aria-label="Fender mesh">
        <g class="caption"><text x="379" y="29">Project : "fender"</text><text x="379" y="42">Module : "2 : Design (Design)"</text></g>
        <g transform="translate(344 190) scale(.33333)" fill="none">
          <path d="M62 350q20 40 75 70 60-5 95-34 60-30 110-44 90-16 190-24 44-10 45-38" stroke="#1c1690" stroke-width="6"/>
          <path d="M560 275l-60-45-120-55" stroke="#1c2c9a" stroke-width="4"/>
          <path d="M100 118q70-20 150-2 70 16 120 50l80 48 40 24q-90-16-175 8-65 18-105 45-30 22-53 58l-12 10-28-28q50-16 78-46 32-30 28-70-12-52-60-70l-58-12z" fill="#08a35c" stroke="#10b468" stroke-width="3"/>
          <path d="M62 112q20-4 50 4M62 112v60l8 60M82 120l-10 110M92 180l-8 90-18 85M100 184l-14 120M62 130l30 24M68 328h50" stroke="#8c24b8" stroke-width="6"/>
          <path d="M64 150l6 70M76 140v85M88 190v100M66 260v90" stroke="#52a4d4" stroke-width="3"/>
          <path d="M100 116l-38 2M106 130l-36-4M112 142l-40 4" stroke="#e0286c" stroke-width="3"/>
          <path d="M160 152l-55 36M185 160l-80 36M202 172L103 206M212 188l-112 24M218 204l-118 14M216 218l-118 2M210 246L96 228M176 278L94 244M142 306l-48-26" stroke="#46b8ac" stroke-width="4"/>
          <path d="M176 308l78 24v48M160 330l68 22v32M152 350l54 24v26M220 284l62 30 2 50M268 266l42 36 2 50M322 252l34 26 2 64M368 236l34 28v66M432 232l6 94M470 250v70M532 268v52M160 370l-22 10v36M232 340l4 44" stroke="#62b4ba" stroke-width="4"/>
          <path d="M138 420v-38l24-10M206 404v-28M230 385v-28l-30-8M256 380v-54M284 365v-52M312 350v-54M358 342v-30M402 328v-52M438 325v-30M532 320v-26" stroke="#ba2884" stroke-width="6"/>
          <path d="M148 88l14 14M112 120v28M102 126l18 18M160 145v14M200 156v14M218 208v14M210 242v12M176 272v12M138 298v12M112 326v8M176 304v12M220 276v14M268 262v10M304 284v16M352 266v16M396 260v16M368 230v12M432 230v12M472 230v36M530 256v22M548 262v14M155 340v14M150 366v16M230 375v14M62 345v12M130 405v14" stroke="#dc1840" stroke-width="11"/>
          <path d="M380 175l54 34 46 30 52 25" stroke="#a82060" stroke-width="5" stroke-dasharray="9 14"/>
          <path d="M462 252l28-18M510 250v20M540 256l-8 30" stroke="#e42434" stroke-width="8"/>
          <path d="M234 178V60" stroke="#7a3c30" stroke-width="4"/><path d="M268 178V84" stroke="#d42018" stroke-width="6"/>
          <path d="M282 162l8 22 8-14" stroke="#e2ee54" stroke-width="7"/>
          <g class="axis"><text x="229" y="54">Z</text><text x="262" y="76">Z</text><text x="338" y="148">X</text><text x="390" y="172">Y</text><text x="310" y="272">X</text></g>
          <g class="coord"><text x="276" y="175">COORd</text><text x="286" y="204">X</text></g>
        </g>
      </svg>
    </section>

    <aside class="right">
      <div class="dockhead"><span class="rail"></span><button class="faint" aria-label="Collapse">▾</button><button aria-label="Close">×</button></div>
      <div class="tabs"><button class="active">Selection</button></div>
      <div class="page">
        <div class="pal">
          <button class="raised" aria-label="Points"><svg><use href="#pts"/></svg></button><button class="raised yel" aria-label="Faces"><svg><use href="#quadf"/></svg></button>
          <button class="raised" aria-label="Contours"><svg><use href="#quad"/></svg></button><button class="raised" aria-label="Curves"><svg><use href="#arc"/></svg></button>
          <button class="raised" aria-label="Objects"><svg><use href="#chest"/></svg></button><button class="raised" aria-label="Surfaces"><svg><use href="#fan"/></svg></button>
        </div>
        <div class="pal second">
          <button class="raised" aria-label="Path"><svg><use href="#path1"/></svg></button><button class="raised" aria-label="Free path"><svg><use href="#path2"/></svg></button>
          <button class="raised yel" aria-label="Expand"><svg><use href="#star"/></svg></button><button class="raised" aria-label="Angle"><svg><use href="#setsq"/></svg></button>
          <button class="raised" aria-label="Plane"><svg><use href="#para"/></svg></button><button class="raised" aria-label="Side"><svg><use href="#para2"/></svg></button>
          <button class="raised" aria-label="Layers"><svg><use href="#layers"/></svg></button><button class="raised pale" aria-label="Box"><svg><use href="#cube"/></svg></button>
          <button class="raised" aria-label="Boxes"><svg><use href="#cubes"/></svg></button><span></span>
          <button class="raised" aria-label="Store"><svg><use href="#bag1"/></svg></button><button class="raised" aria-label="Wand"><svg><use href="#wand"/></svg></button>
          <button class="raised" aria-label="Recall"><svg><use href="#bag2"/></svg></button><button class="raised" aria-label="Undo"><svg><use href="#undo"/></svg></button>
        </div>
        <div class="pal">
          <button class="raised down" aria-label="Add"><svg><use href="#plus"/></svg></button><button class="raised" aria-label="Replace"><svg><use href="#equals"/></svg></button>
          <button class="raised" aria-label="Remove"><svg><use href="#minus"/></svg></button><button class="raised" aria-label="Info"><svg><use href="#info"/></svg></button>
        </div>
      </div>
    </aside>
  </main>

  <footer class="status"><span class="ready">Ready</span><span class="msg"></span><span class="cell">ADV</span><span class="cell">MAJ</span><span class="cell">NUM</span><span class="cell">DEF</span></footer>

  <div class="taskbar">
    <button class="start"><svg viewBox="0 0 16 16"><path d="M2 4q3-2 5 0v4q-2-2-5 0z" fill="#e8512c"/><path d="M8 4q3 2 6 0v4q-3 2-6 0z" fill="#8ccc3c"/><path d="M1 9q3-2 5 0v4q-2-2-5 0z" fill="#4a86e8"/><path d="M7 9q3 2 6 0v4q-3 2-6 0z" fill="#f6cc34"/></svg><span>开始</span></button>
    <div class="tasks">
      <button><svg><use href="#folder"/></svg>PAM-SYSTEM</button>
      <button><svg><use href="#folder"/></svg>fender</button>
      <button><svg viewBox="0 0 16 16"><circle cx="8" cy="8" r="6.500" fill="#5a9ad8" stroke="#dff" stroke-width="1.500"/><path d="M5 6h6v4H5z" fill="#e8f4ff"/></svg>AEK( 中国 )ERSS ...</button>
      <button class="current"><svg><use href="#logo"/></svg>PAM-STAMP 2G - f...</button>
    </div>
    <svg class="kbd" viewBox="0 0 16 16"><path d="M2 6h12v6H2z" fill="#c4c4c8" stroke="#666"/><path d="M3 8h10M3 10h10" stroke="#667" stroke-dasharray="1 1"/></svg>
    <div class="tray">
      <svg viewBox="0 0 16 16"><circle cx="8" cy="8" r="7" fill="#4cb4f4"/><path d="M10 4L6 8l4 4" fill="none" stroke="#fff" stroke-width="2.200"/></svg>
      <svg viewBox="0 0 16 16"><path d="M1 6h8l5 3-5 3H1z" fill="#ddd6b0" stroke="#333"/><circle cx="11" cy="7" r="3" fill="#333"/></svg>
      <svg viewBox="0 0 16 16"><circle cx="8" cy="8" r="6" fill="#5c9ce4" stroke="#e4f4ff" stroke-width="1.800"/><path d="M5 6h6v4H5z" fill="#dff0ff"/></svg>
      <svg viewBox="0 0 16 16"><path d="M2 2h10v8H2z" fill="#b4e84c"/><path d="M6 7h9v7H6z" fill="#7cc828"/><path d="M4 7l4 4 5-6" stroke="#fff" stroke-width="2" fill="none"/></svg>
      <svg viewBox="0 0 16 16"><path d="M7 2h8v6H7zM1 7h8v6H1z" fill="#243c9c" stroke="#b8c4e8"/></svg>
      <svg viewBox="0 0 16 16"><path d="M2 3h7v6H2z" fill="#445" stroke="#bbc"/><path d="M7 7h7v6H7z" fill="#d8d8e0"/><path d="M8 8l5 5M13 8l-5 5" stroke="#c22" stroke-width="2"/></svg>
      <svg viewBox="0 0 16 16"><path d="M2 9q1-6 7-6l5-2-1 6q0 6-6 7H2z" fill="#c41c34"/></svg>
      <svg viewBox="0 0 16 16"><circle cx="8" cy="4" r="3" fill="#b0e890"/><path d="M3 8h10v4l-3 3H6l-3-3z" fill="#70c840"/><path d="M8 9v4" stroke="#efe" stroke-width="2"/></svg>
      <time>11:13</time>
    </div>
  </div>
</div>
</body>
</html>
```

FILE: styles.css
```css
* { box-sizing: border-box; }
body { margin: 0; background: #000; font: 11px/14px "Liberation Sans", sans-serif; color: #3c3c34; }
button { font: inherit; color: inherit; background: none; border: 0; padding: 0; margin: 0; }
svg { display: block; flex: none; }
h1, h2, ul { margin: 0; padding: 0; list-style: none; }
.defs { position: absolute; width: 0; height: 0; }
.app { display: flex; flex-direction: column; height: 100vh; margin: 0 64px; background: #e7e6d8; overflow: hidden; }
.row { display: flex; align-items: center; }
.grow { flex: 1; min-width: 0; }
.i14 { width: 14px; height: 14px; }
.i16 { width: 16px; height: 16px; }

.titlebar { display: flex; align-items: center; gap: 4px; height: 24px; padding: 0 2px; background: linear-gradient(#2a86f8 0, #0a55e0 4px, #0052e2 14px, #0262fa 20px, #0a48c0 24px); color: #fff; flex: none; }
.titlebar h1, .doctitle h2 { flex: 1; font: bold 12px/16px "Liberation Mono", monospace; color: #dceaff; }
.winbtns { display: flex; gap: 3px; }
.wb { width: 18px; height: 18px; border: 1px solid #b4ccf8; border-radius: 3px; background: linear-gradient(135deg, #5a90f0, #2050cc); }
.wb svg { width: 16px; height: 16px; }
.wb.close { background: linear-gradient(135deg, #ec8a6c, #cc3c1c); }

.menubar { display: flex; align-items: center; gap: 9px; height: 22px; padding-left: 14px; border-bottom: 1px solid #d0cfc0; flex: none; }
.toolbar { display: flex; align-items: center; height: 24px; padding-left: 9px; border-bottom: 1px solid #d6d5c7; border-top: 1px solid #f3f2e8; flex: none; overflow: hidden; }
.tb { width: 20px; height: 20px; padding: 2px; flex: none; }
.tb svg { width: 16px; height: 16px; }
.tb.on { background: #f4f3ea; border-radius: 1px; }
.sep { width: 7px; height: 20px; flex: none; background: linear-gradient(90deg, transparent 3px, #bdbcae 3px, #bdbcae 4px, #f6f5ec 4px, #f6f5ec 5px, transparent 5px); }
.sep.thin { width: 6px; }
.grip { width: 11px; height: 20px; flex: none; background: linear-gradient(90deg, transparent 2px, #c5c4b6 2px, #c5c4b6 3px, #f6f5ec 3px, #f6f5ec 5px, #c5c4b6 5px, #c5c4b6 6px, #f6f5ec 6px, #f6f5ec 8px, transparent 8px); }
.grip.wide { margin-left: 10px; }
.yel { color: #f4f01c; }
.olive { color: #a8a82c; }
.pale { color: #e2e2b8; }
.gray { color: #a4a69c; }
.tealc { color: #148a88; }

.combo { position: relative; display: block; height: 16px; border: 1px solid #77766a; border-right-color: #c8c7b9; border-bottom-color: #c8c7b9; background: #fbfbf9; flex: none; }
.combo select { appearance: none; display: block; width: 100%; height: 14px; padding: 0 14px 0 1px; border: 0; background: none; font: inherit; line-height: 14px; color: #3a3a35; opacity: 1; }
.combo::after { content: "▾"; position: absolute; top: 0; right: 0; width: 13px; height: 14px; background: #e9e8dc; border-right: 1px solid #8d8c80; border-bottom: 1px solid #8d8c80; font: 12px/12px "DejaVu Sans", sans-serif; text-align: center; color: #000; pointer-events: none; }
.combo.mono { font: bold 9px/14px "Liberation Mono", monospace; }
.combo.grow { flex: 1; }
.combo.off { background: #e7e6d8; border-color: #a9a89a; }
.combo.off::after, .combo.off select { color: #a9a89b; }
.system { width: 86px; height: 20px; margin: 0 1px 0 2px; font-size: 12px; font-weight: bold; }
.system select { height: 18px; }
.system::after { height: 18px; line-height: 17px; border: 0; background: #fbfbf9; }
.template { width: 128px; height: 18px; margin: 0 5px 0 2px; }
.template select, .template::after { height: 16px; }

.main { flex: 1; display: flex; min-height: 0; padding-top: 3px; border-top: 1px solid #c7d0cc; }
.left { width: 202px; flex: none; display: flex; flex-direction: column; }
.dock { display: flex; flex-direction: column; padding: 2px 7px 7px 4px; border-bottom: 2px solid #bdbcae; border-right: 1px solid #c5c4b6; }
.dock.low { flex: 1; min-height: 0; border-bottom: 0; padding-bottom: 4px; }
.dockhead { display: flex; align-items: center; gap: 3px; height: 12px; flex: none; }
.rail { flex: 1; height: 6px; margin-right: 7px; border-top: 1px solid #f8f7ee; border-bottom: 1px solid #c9c8ba; background: #dddccf; }
.dockhead button { width: 11px; height: 11px; border-right: 1px solid #77766a; border-bottom: 1px solid #77766a; font: bold 10px/9px "DejaVu Sans", sans-serif; color: #222; }
.dockhead .faint { color: #b5b4a7; }
.tabs { display: flex; height: 24px; padding: 6px 0 0 7px; flex: none; }
.tabs button { height: 14px; padding-right: 3px; margin-right: 6px; border-right: 2px solid #77766a; white-space: nowrap; }
.page { border: 2px solid #a9a89a; border-left-color: #c2c1b3; padding: 4px; display: flex; flex-direction: column; }
.tall { height: 284px; }
.tall .page, .mid .page, .low .page { flex: 1; min-height: 0; }
.tall .page { padding-top: 2px; }
.mid { height: 180px; }
.mid .tabs { padding-top: 8px; }
.low .tabs { padding-top: 7px; }
.field { display: flex; align-items: center; height: 16px; margin-bottom: 6px; font: bold 9px/14px "Liberation Mono", monospace; }
.field input { flex: 1; min-width: 0; height: 14px; margin: 0 14px 0 4px; padding: 0; border: 0; border-top: 1px solid #cfcec0; border-right: 1px solid #cfcec0; background: none; font: inherit; color: inherit; }
.objects { margin-top: 5px; height: 18px; }
.raised { display: flex; align-items: center; justify-content: center; border: 1px solid; border-color: #f8f7ee #98978a #98978a #f8f7ee; flex: none; }
.lines { width: 26px; height: 18px; margin-left: 5px; }
.lines svg { width: 24px; height: 14px; }
.drop { width: 9px; height: 18px; font-size: 9px; }
.listbox { position: relative; display: flex; height: 121px; margin-top: 10px; border: 1px solid #8d8c80; border-right-color: #ddd; border-bottom-color: #ddd; background: #fafaf8; }
.listbox ul { flex: 1; font: bold 9px/14px "Liberation Mono", monospace; overflow: hidden; }
.listbox li { padding-left: 2px; }
.listbox .sel { background: #2f66c2; color: #dbe8ff; }
.scroll { width: 15px; display: flex; flex-direction: column; padding: 1px 0; background: #f2f3fa; }
.scroll button { height: 13px; display: flex; align-items: center; justify-content: center; background: #cddcfa; border-radius: 2px; }
.scroll svg { width: 10px; height: 8px; }
.thumb { height: 52px; margin: 1px; background: #c5d3fa; border: 1px solid #b0c2f0; border-radius: 2px; }
.track { flex: 1; }
.pointer { position: absolute; left: 14px; top: 102px; width: 14px; height: 18px; }
.shapes { margin-top: 8px; color: #1fa02c; }
.sq { width: 27px; height: 26px; }
.sq svg { width: 22px; height: 22px; }
.sq.down { color: #14e01c; }
.down { background: #f2f1e6; border-color: #98978a #f8f7ee #f8f7ee #98978a; }
.small { width: 20px; height: 20px; margin-left: auto; }
.small svg { width: 17px; height: 17px; }
.display { height: 26px; margin-bottom: 6px; font: bold 9px/14px "Liberation Mono", monospace; }
.display input { width: 10px; height: 10px; margin: 0 5px 0 3px; appearance: none; background: #fafaf6; border: 1px solid #8d8c80; border-right-color: #ddd; border-bottom-color: #ddd; }
.display .combo { flex: 1; min-width: 0; }
.chart { width: 27px; height: 25px; margin-left: 10px; }
.chart svg { width: 20px; height: 20px; }
.drop2 { width: 11px; height: 25px; margin-right: 11px; color: #999; font-size: 9px; }
.go { width: 20px; height: 18px; margin-left: 5px; color: #b5b4a7; font: bold 9px/14px "Liberation Mono", monospace; }
.diemaker { flex-direction: row; gap: 8px; padding: 5px 0 0 3px; overflow: hidden; font: bold 9px/14px "Liberation Mono", monospace; }
.diemaker .i16 { margin-top: 7px; }
.skin { height: 16px; }
.skin .combo { width: 98px; }
.skin .pick { margin-left: auto; width: 8px; height: 16px; border-bottom: 1px solid #777; }
.pick svg { width: 8px; height: 14px; }
fieldset { margin: 1px 0 0; padding: 0 0 0 4px; border: 1px solid #c2c1b3; border-bottom: 0; border-right: 0; min-width: 0; }
legend { padding: 0; }
.ticks { height: 4px; background: repeating-linear-gradient(90deg, transparent 0 10px, #9a998c 10px 12px); margin-left: 12px; }

.doc { flex: 1; min-width: 0; display: flex; flex-direction: column; margin: 0 5px 4px; background: #1d4fd0; border: 1px solid #0a2c9a; border-bottom: 3px solid #0c2488; border-radius: 5px 5px 0 0; padding: 0 4px; }
.doctitle { display: flex; align-items: center; gap: 4px; height: 27px; margin: 0 -4px; padding: 0 5px; flex: none; border-radius: 4px 4px 0 0; background: linear-gradient(#3a8cf8 0, #0a5ae8 5px, #0454e4 16px, #0664f8 24px, #0a48c8 27px); }
.scene { flex: 1; min-height: 0; width: 100%; background: #000; border-bottom: 1px solid #7c86b8; border-right: 1px solid #7c86d8; }
.caption { font: bold 10px "Liberation Sans", sans-serif; fill: #e4e4e4; }
.axis { font: bold 26px "Liberation Sans", sans-serif; fill: #f0f0f0; }
.coord { font: bold 20px "Liberation Sans", sans-serif; fill: #c4e8fa; }

.right { width: 85px; flex: none; display: flex; flex-direction: column; padding: 2px 6px 8px 7px; border-left: 1px solid #c9b896; }
.right .page { flex: 1; min-height: 0; padding: 1px 4px 1px 2px; }
.pal { display: grid; grid-template-columns: 1fr 1fr; grid-auto-rows: 28px; gap: 2px 4px; color: #a8ac38; }
.second { margin: 12px 0 6px; }
.pal svg { width: 24px; height: 24px; }
.pal .yel { color: #f4f01c; }
.pal .pale { color: #dcd870; }

.status { display: flex; align-items: center; gap: 4px; height: 18px; padding-right: 2px; border-top: 2px solid #f5f4ec; font: bold 9px/14px "Liberation Mono", monospace; flex: none; }
.ready { flex: 1; padding-left: 1px; }
.msg { width: 182px; height: 14px; border-left: 1px solid #bdbcae; border-top: 1px solid #cfcec0; }
.cell { padding: 0 1px; height: 14px; border: 1px solid #c5c4b6; border-right-color: #f5f4ec; border-bottom-color: #f5f4ec; color: #b9b8aa; }

.taskbar { display: flex; align-items: stretch; height: 26px; background: linear-gradient(#7aa0d8 0, #2a62e0 4px, #2358d8 20px, #1a48b8 26px); color: #dce8ff; flex: none; }
.start { display: flex; align-items: center; gap: 7px; width: 88px; padding-left: 9px; border-radius: 0 8px 8px 0; background: linear-gradient(#5aa85a 0, #358c38 6px, #2f8a34 20px, #1f6a28 26px); color: #bfe0b8; font: italic 16px/20px "Liberation Sans", "Noto Sans CJK SC", sans-serif; }
.start svg { width: 18px; height: 18px; }
.tasks { display: flex; flex: 1; gap: 1px; margin-left: 7px; }
.tasks button { display: flex; align-items: center; gap: 4px; flex: 0 1 143px; min-width: 0; padding-left: 8px; margin-top: 2px; background: linear-gradient(#5a94f4 0, #3a78ee 5px, #3470e8 20px, #2a5cd0 24px); font: bold 9px/14px "Liberation Mono", "Noto Sans CJK SC", monospace; white-space: nowrap; }
.tasks svg { width: 16px; height: 16px; }
.tasks .current { background: #1747b4; }
.kbd { width: 14px; height: 14px; align-self: center; margin-right: 3px; }
.tray { display: flex; align-items: center; gap: 2px; padding-right: 11px; background: linear-gradient(#6ab4e8 0, #1590ec 4px, #128ae8 20px, #0c6cc4 26px); font: 10px/14px "Liberation Mono", monospace; color: #e4f2ff; }
.tray svg { width: 14px; height: 14px; }
.tray time { margin-left: 4px; }
```
